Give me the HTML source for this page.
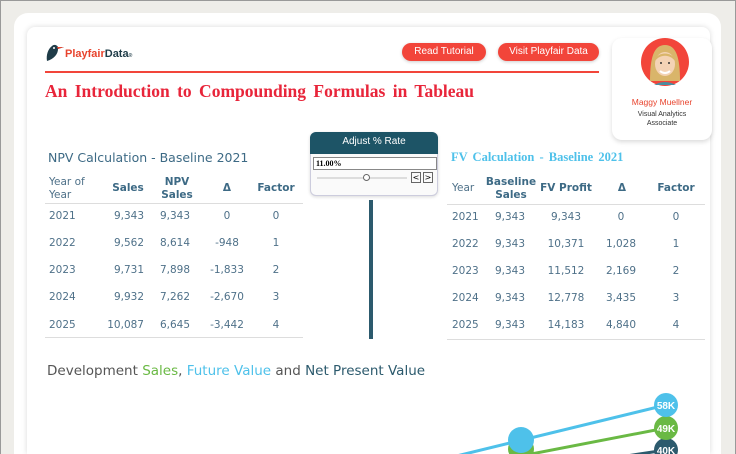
<!DOCTYPE html>
<html style="width:736px;height:454px;overflow:hidden"><head><style>
*{margin:0;padding:0;box-sizing:border-box}
body{width:736px;height:454px;overflow:hidden;background:#eeede9;font-family:"DejaVu Sans","Liberation Sans",sans-serif;position:relative}
.frame{position:absolute;left:0;top:0;width:736px;height:454px;border:1px solid #999;border-bottom:none}
.outer{position:absolute;left:14px;top:13px;width:707px;height:441px;background:#fff;border-radius:14px 14px 0 0}
.inner{position:absolute;left:27px;top:27px;width:683px;height:427px;background:#fff;border-radius:8px 8px 0 0;box-shadow:0 0 6px rgba(0,0,0,.15)}
.a{position:absolute;white-space:nowrap}
.t{color:#4f7189;font-size:10.5px}
.h{color:#3d6a85;font-size:10.5px;font-weight:bold;text-align:center;line-height:13px}
.btn{position:absolute;top:43px;height:18px;background:#f2453a;color:#fff;border-radius:9px;font-size:10px;text-align:center;line-height:18px;font-family:"Liberation Sans",sans-serif;box-shadow:0 1px 3px rgba(0,0,0,.2)}
.line{position:absolute;height:1px;background:#ddd}
</style></head><body>
<div class="frame"></div>
<div class="outer"></div>
<div class="inner"></div>
<svg class="a" style="left:44px;top:41px" width="22" height="22" viewBox="0 0 22 22"><path d="M3 20 C2 14 4 8 8 5 C10 3 13 4 14 6 L20 6 L14 8 C14 13 10 18 3 20Z" fill="#1f3c48"/><path d="M13 6 L20 6 L14 8Z" fill="#e8442e"/><circle cx="10" cy="7" r="1" fill="#fff"/></svg>
<div class="a" style="left:65px;top:48px;font-family:'Liberation Sans',sans-serif;font-size:11px;font-weight:bold;color:#e8442e">Playfair<span style="color:#1f3c48">Data</span><span style="font-size:5px;color:#1f3c48">®</span></div>
<div class="btn" style="left:402px;width:84px">Read Tutorial</div>
<div class="btn" style="left:498px;width:101px">Visit Playfair Data</div>
<div class="a" style="left:45px;top:71px;width:554px;height:2px;background:#f2453a"></div>
<div class="a" style="left:45px;top:81px;font-family:'Liberation Serif',serif;font-weight:bold;font-size:17.5px;color:#e8253a;word-spacing:3px">An Introduction to Compounding Formulas in Tableau</div>
<div class="a" style="left:612px;top:38px;width:100px;height:102px;background:#fff;border-radius:10px;box-shadow:0 2px 5px rgba(0,0,0,.15)"></div>
<svg class="a" style="left:640px;top:37px" width="50" height="50" viewBox="0 0 50 50"><circle cx="25" cy="25" r="24" fill="#f2453a"/><path d="M10 44 C10 20 14 8 25 8 C36 8 40 20 40 44Z" fill="#d9b56a"/><ellipse cx="25" cy="27" rx="10" ry="12" fill="#f4d3b5"/><path d="M15 24 C16 14 34 14 35 24 C30 17 20 17 15 24Z" fill="#d9b56a"/><path d="M20 34 Q25 38 30 34" stroke="#fff" stroke-width="2" fill="none"/><circle cx="21" cy="26" r="1" fill="#333"/><circle cx="29" cy="26" r="1" fill="#333"/><path d="M14 48 Q25 42 36 48" fill="#4a8da0"/></svg>
<div class="a" style="left:612px;top:97px;width:100px;text-align:center;font-family:'Liberation Sans',sans-serif;font-size:8.5px;color:#e8442e">Maggy Muellner</div>
<div class="a" style="left:612px;top:110px;width:100px;text-align:center;font-family:'Liberation Sans',sans-serif;font-size:7px;line-height:9px;color:#333">Visual Analytics<br>Associate</div>
<div class="a" style="left:48px;top:150px;font-size:12.5px;color:#3d6a85">NPV Calculation - Baseline 2021</div>
<div class="a t" style="left:49px;top:176px;line-height:13px">Year of<br>Year</div>
<div class="a h" style="left:106px;top:182px;width:44px">Sales</div>
<div class="a h" style="left:155px;top:176px;width:44px">NPV<br>Sales</div>
<div class="a h" style="left:217px;top:182px;width:20px">Δ</div>
<div class="a h" style="left:256px;top:182px;width:40px">Factor</div>
<div class="line" style="left:45px;top:203px;width:258px"></div>
<div class="line" style="left:45px;top:337px;width:258px"></div>
<div class="a" style="left:451px;top:150px;font-family:'Liberation Serif',serif;font-weight:bold;font-size:12.5px;color:#4ec1ea;word-spacing:2px">FV Calculation - Baseline 2021</div>
<div class="a t" style="left:452px;top:182px">Year</div>
<div class="a h" style="left:483px;top:176px;width:56px">Baseline<br>Sales</div>
<div class="a h" style="left:536px;top:182px;width:60px">FV Profit</div>
<div class="a h" style="left:612px;top:182px;width:20px">Δ</div>
<div class="a h" style="left:656px;top:182px;width:40px">Factor</div>
<div class="line" style="left:447px;top:204px;width:258px"></div>
<div class="line" style="left:447px;top:339px;width:258px"></div>
<div class="a" style="left:310px;top:132px;width:128px;height:64px;border:1px solid #ccd;border-radius:6px;background:#fafafa;box-shadow:0 1px 3px rgba(0,0,0,.15)"></div>
<div class="a" style="left:310px;top:132px;width:128px;height:22px;background:#1d5466;border-radius:6px 6px 0 0;color:#fff;font-family:'Liberation Sans',sans-serif;font-size:10px;text-align:center;line-height:20px">Adjust % Rate</div>
<div class="a" style="left:313px;top:157px;width:124px;height:13px;border:1px solid #888;background:#fff;font-family:'Liberation Serif',serif;font-size:8px;font-weight:bold;padding-left:2px;line-height:11px">11.00%</div>
<div class="a" style="left:317px;top:177px;width:90px;height:2px;background:#ddd"></div>
<div class="a" style="left:363px;top:174px;width:7px;height:7px;border:1px solid #666;border-radius:50%;background:#fff"></div>
<div class="a" style="left:411px;top:172px;width:10px;height:11px;border:1px solid #666;font-size:8px;line-height:9px;text-align:center">&lt;</div>
<div class="a" style="left:423px;top:172px;width:10px;height:11px;border:1px solid #666;font-size:8px;line-height:9px;text-align:center">&gt;</div>
<div class="a" style="left:369px;top:200px;width:4px;height:139px;background:#2c5a6d"></div>
<div class="a" style="left:47px;top:363px;font-size:13.5px;color:#555">Development <span style="color:#6ab944">Sales</span>, <span style="color:#4ec1ea">Future Value</span> and <span style="color:#2c5a6d">Net Present Value</span></div>
<svg class="a" style="left:0;top:380px" width="736" height="74">
<line x1="440" y1="80" x2="666" y2="25" stroke="#4ec1ea" stroke-width="3"/>
<line x1="500" y1="80" x2="666" y2="48" stroke="#6ab944" stroke-width="3"/>
<line x1="600" y1="80" x2="666" y2="70" stroke="#2c5a6d" stroke-width="3"/>
<ellipse cx="521" cy="69" rx="13" ry="12" fill="#6ab944"/>
<ellipse cx="521" cy="60" rx="13" ry="13" fill="#4ec1ea"/>
<ellipse cx="666" cy="70" rx="12" ry="12" fill="#2c5a6d"/>
<ellipse cx="666" cy="48" rx="12" ry="12" fill="#6ab944"/>
<ellipse cx="666" cy="25" rx="12" ry="12" fill="#4ec1ea"/>
<text x="666" y="29" fill="#fff" font-size="10" font-weight="bold" text-anchor="middle" font-family="Liberation Sans">58K</text>
<text x="666" y="52" fill="#fff" font-size="10" font-weight="bold" text-anchor="middle" font-family="Liberation Sans">49K</text>
<text x="666" y="74" fill="#fff" font-size="10" font-weight="bold" text-anchor="middle" font-family="Liberation Sans">40K</text>
</svg>
<div class="a t" style="left:49px;top:210px">2021</div><div class="a t" style="left:98px;top:210px;width:46px;text-align:right">9,343</div><div class="a t" style="left:144px;top:210px;width:46px;text-align:right">9,343</div><div class="a t" style="left:207px;top:210px;width:40px;text-align:center">0</div><div class="a t" style="left:256px;top:210px;width:40px;text-align:center">0</div>
<div class="a t" style="left:49px;top:237px">2022</div><div class="a t" style="left:98px;top:237px;width:46px;text-align:right">9,562</div><div class="a t" style="left:144px;top:237px;width:46px;text-align:right">8,614</div><div class="a t" style="left:207px;top:237px;width:40px;text-align:center">-948</div><div class="a t" style="left:256px;top:237px;width:40px;text-align:center">1</div>
<div class="a t" style="left:49px;top:264px">2023</div><div class="a t" style="left:98px;top:264px;width:46px;text-align:right">9,731</div><div class="a t" style="left:144px;top:264px;width:46px;text-align:right">7,898</div><div class="a t" style="left:207px;top:264px;width:40px;text-align:center">-1,833</div><div class="a t" style="left:256px;top:264px;width:40px;text-align:center">2</div>
<div class="a t" style="left:49px;top:291px">2024</div><div class="a t" style="left:98px;top:291px;width:46px;text-align:right">9,932</div><div class="a t" style="left:144px;top:291px;width:46px;text-align:right">7,262</div><div class="a t" style="left:207px;top:291px;width:40px;text-align:center">-2,670</div><div class="a t" style="left:256px;top:291px;width:40px;text-align:center">3</div>
<div class="a t" style="left:49px;top:319px">2025</div><div class="a t" style="left:98px;top:319px;width:46px;text-align:right">10,087</div><div class="a t" style="left:144px;top:319px;width:46px;text-align:right">6,645</div><div class="a t" style="left:207px;top:319px;width:40px;text-align:center">-3,442</div><div class="a t" style="left:256px;top:319px;width:40px;text-align:center">4</div>
<div class="a t" style="left:452px;top:211px">2021</div><div class="a t" style="left:490px;top:211px;width:40px;text-align:center">9,343</div><div class="a t" style="left:541px;top:211px;width:50px;text-align:center">9,343</div><div class="a t" style="left:600px;top:211px;width:42px;text-align:center">0</div><div class="a t" style="left:656px;top:211px;width:40px;text-align:center">0</div>
<div class="a t" style="left:452px;top:238px">2022</div><div class="a t" style="left:490px;top:238px;width:40px;text-align:center">9,343</div><div class="a t" style="left:541px;top:238px;width:50px;text-align:center">10,371</div><div class="a t" style="left:600px;top:238px;width:42px;text-align:center">1,028</div><div class="a t" style="left:656px;top:238px;width:40px;text-align:center">1</div>
<div class="a t" style="left:452px;top:265px">2023</div><div class="a t" style="left:490px;top:265px;width:40px;text-align:center">9,343</div><div class="a t" style="left:541px;top:265px;width:50px;text-align:center">11,512</div><div class="a t" style="left:600px;top:265px;width:42px;text-align:center">2,169</div><div class="a t" style="left:656px;top:265px;width:40px;text-align:center">2</div>
<div class="a t" style="left:452px;top:292px">2024</div><div class="a t" style="left:490px;top:292px;width:40px;text-align:center">9,343</div><div class="a t" style="left:541px;top:292px;width:50px;text-align:center">12,778</div><div class="a t" style="left:600px;top:292px;width:42px;text-align:center">3,435</div><div class="a t" style="left:656px;top:292px;width:40px;text-align:center">3</div>
<div class="a t" style="left:452px;top:319px">2025</div><div class="a t" style="left:490px;top:319px;width:40px;text-align:center">9,343</div><div class="a t" style="left:541px;top:319px;width:50px;text-align:center">14,183</div><div class="a t" style="left:600px;top:319px;width:42px;text-align:center">4,840</div><div class="a t" style="left:656px;top:319px;width:40px;text-align:center">4</div>
</body></html>
